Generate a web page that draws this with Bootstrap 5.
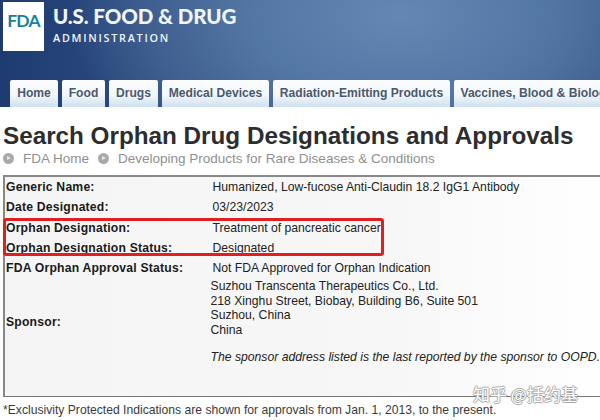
<!DOCTYPE html>
<html lang="en"><head><meta charset="utf-8"><title>FDA</title>
<link href="https://cdn.jsdelivr.net/npm/bootstrap@5.3.0/dist/css/bootstrap.min.css" rel="stylesheet">
<style>
html,body{margin:0;width:600px;height:420px;overflow:hidden;background:#fff}
body{font-family:"Liberation Sans",Arial,sans-serif;position:relative}
.fda-head{height:107px;background:radial-gradient(ellipse 330px 190px at 400px 15px,#6487b3 0%,#5377a5 45%,#3f6090 75%,transparent 100%),linear-gradient(90deg,#1f3c72 0%,#2c4b80 25%,#41618f 100%);padding:2px 0 0 3px;overflow:hidden;white-space:nowrap}
.fda-logo{width:41px;height:49px;background:#fff;color:#1a7f9f;font:700 17.5px/37px "Lato",sans-serif;letter-spacing:-.8px;text-align:center}
.fda-brand{margin-left:9px;color:#f1f4f8}
.fda-t1{font:900 20.5px/25px "Lato",sans-serif;margin-top:2px;letter-spacing:-.1px}
.fda-t2{font:600 10.8px/14px "Open Sans",sans-serif;letter-spacing:1.75px;margin-top:2px}
.fda-top{height:78px}
.fda-tabs{margin-left:7px;gap:4px;height:27px}
.fda-tab{height:27px;border-radius:2px 2px 0 0;background:linear-gradient(#fbfcfe 0%,#f3f7fb 55%,#cfe0f0 100%);color:#49586e;font:700 12.1px/27px "Liberation Sans",sans-serif;padding:0 6.5px;flex:none;text-align:center}
.fda-title{font:700 24.25px/30px "Liberation Sans",sans-serif;color:#2d2d2f;margin:14px 0 0 3px;white-space:nowrap}
.fda-crumbs{font-size:13.5px;line-height:17px;color:#8f8f8f;margin:-1px 0 0 3px;white-space:nowrap;gap:9px}
.fda-dot{width:11px;height:11px;border-radius:50%;background:#a9a9a9;position:relative;flex:none}
.fda-dot::after{content:"";position:absolute;left:4px;top:3px;border-left:4px solid #e8e8e8;border-top:2.5px solid transparent;border-bottom:2.5px solid transparent}
.fda-box{width:640px;height:222px;margin:8px 0 0 2.5px;border:1px solid #777;border-top:2px solid #888;border-left:2px solid #888;background:linear-gradient(90deg,#f5f5f5 0%,#f7f7f7 60%,#fff 95%);font-size:12.2px;color:#222}
.fda-row{height:20.3px;line-height:20px}
.fda-lab{width:208px;padding-left:1.5px;font-weight:700;color:#1a1a1a;flex:none;letter-spacing:.2px}
.fda-sp{padding-top:1px}
.fda-sp .fda-lab{align-self:center}
.fda-addr{line-height:14.4px;margin-left:-2px}
.fda-note{font-style:italic;margin-top:13px;white-space:nowrap}
.fda-foot{font-size:12.15px;color:#3a3a3a;margin:4px 0 0 3px;white-space:nowrap}
.fda-red{position:absolute;left:3px;top:218px;width:381px;height:38px;border:3px solid #e02020;border-radius:3px}
.fda-mark{position:absolute;left:473px;top:383px;font:400 17px/22px "Noto Sans CJK SC",sans-serif;color:#fff;text-shadow:-1px 0 #aaa,1px 0 #aaa,0 -1px #aaa,0 1px #aaa;white-space:nowrap}
</style></head><body>
<header class="fda-head">
 <div class="d-flex fda-top">
  <div class="fda-logo">FDA</div>
  <div class="fda-brand"><div class="fda-t1">U.S. FOOD &amp; DRUG</div><div class="fda-t2">ADMINISTRATION</div></div>
 </div>
 <nav class="d-flex fda-tabs">
  <div class="fda-tab" style="width:48px">Home</div><div class="fda-tab" style="width:43px">Food</div><div class="fda-tab" style="width:49px">Drugs</div><div class="fda-tab" style="width:107px">Medical Devices</div><div class="fda-tab" style="width:177px">Radiation-Emitting Products</div><div class="fda-tab">Vaccines, Blood &amp; Biologics</div>
 </nav>
</header>
<h1 class="fda-title">Search Orphan Drug Designations and Approvals</h1>
<div class="d-flex align-items-center fda-crumbs"><span class="fda-dot"></span><span>FDA Home</span><span class="fda-dot"></span><span>Developing Products for Rare Diseases &amp; Conditions</span></div>
<div class="fda-box">
 <div class="d-flex fda-row"><div class="fda-lab">Generic Name:</div><div>Humanized, Low-fucose Anti-Claudin 18.2 IgG1 Antibody</div></div>
 <div class="d-flex fda-row"><div class="fda-lab">Date Designated:</div><div>03/23/2023</div></div>
 <div class="d-flex fda-row"><div class="fda-lab">Orphan Designation:</div><div>Treatment of pancreatic cancer</div></div>
 <div class="d-flex fda-row"><div class="fda-lab">Orphan Designation Status:</div><div>Designated</div></div>
 <div class="d-flex fda-row"><div class="fda-lab">FDA Orphan Approval Status:</div><div>Not FDA Approved for Orphan Indication</div></div>
 <div class="d-flex fda-sp"><div class="fda-lab">Sponsor:</div><div class="fda-addr">Suzhou Transcenta Therapeutics Co., Ltd.<br>218 Xinghu Street, Biobay, Building B6, Suite 501<br>Suzhou, China<br>China<div class="fda-note">The sponsor address listed is the last reported by the sponsor to OOPD.</div></div></div>
</div>
<p class="fda-foot">*Exclusivity Protected Indications are shown for approvals from Jan. 1, 2013, to the present.</p>
<div class="fda-red"></div>
<div class="fda-mark">知乎 @括约基</div>
<script src="https://cdn.jsdelivr.net/npm/bootstrap@5.3.0/dist/js/bootstrap.bundle.min.js"></script>
</body></html>
